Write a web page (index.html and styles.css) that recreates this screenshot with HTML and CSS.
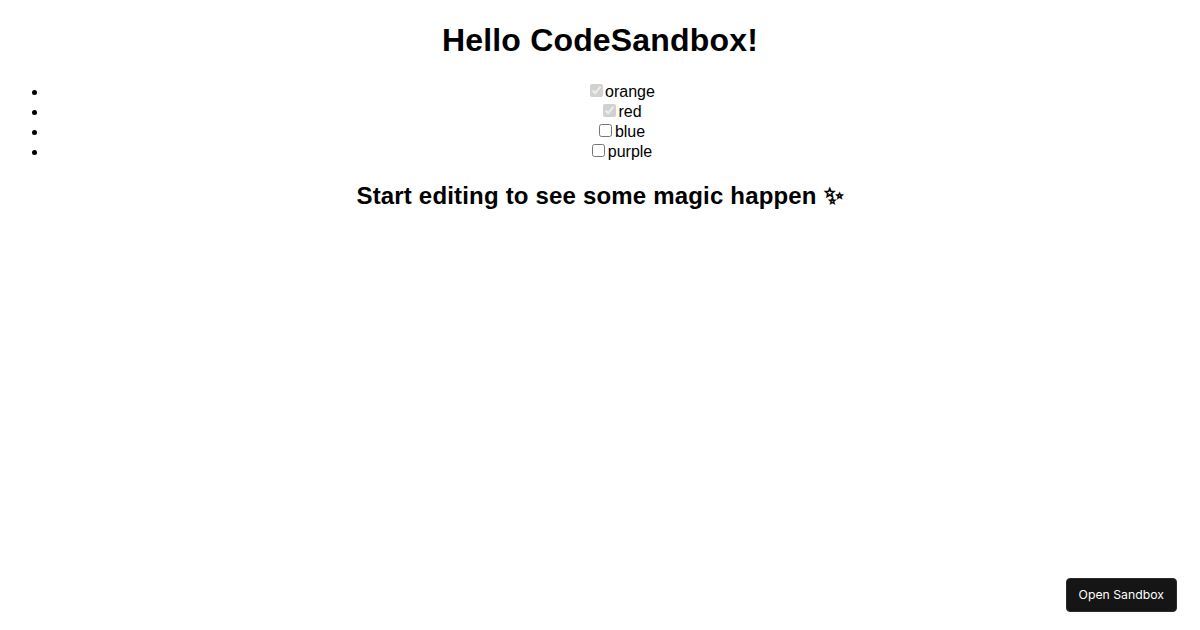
FILE: index.html
```html
<!DOCTYPE html>
<html lang="en">
<head>
<meta charset="utf-8">
<title>Hello CodeSandbox</title>
<link rel="stylesheet" href="styles.css">
</head>
<body>
<div class="app">
<h1>Hello CodeSandbox!</h1>
<ul>
<li><label><input type="checkbox" checked disabled>orange</label></li>
<li><label><input type="checkbox" checked disabled>red</label></li>
<li><label><input type="checkbox">blue</label></li>
<li><label><input type="checkbox">purple</label></li>
</ul>
<h2>Start editing to see some magic happen <span class="sparkle">✨&#xFE0E;</span></h2>
</div>
<a class="open" href="#">Open Sandbox</a>
</body>
</html>
```
FILE: styles.css
```css
body { font-family: Helvetica, Arial, sans-serif; text-rendering: optimizeSpeed; }
.app { text-align: center; }
h1 { margin: 14px 0 22.44px; letter-spacing: 0.18px; }
h2 { margin-top: 21px; letter-spacing: 0.18px; }
input:disabled { margin: 3px 2px 3px 5px; }
.sparkle { font-family: "DejaVu Sans", sans-serif; font-variant-emoji: text; letter-spacing: 0; }
.open {
  position: fixed; right: 23px; bottom: 18px;
  background: #151515; color: #fff; border-radius: 4px;
  border: 1px solid #2a2a2a;
  font: 12.25px Inter, sans-serif; padding: 9px 12px;
  text-decoration: none; line-height: 14px;
}
```
